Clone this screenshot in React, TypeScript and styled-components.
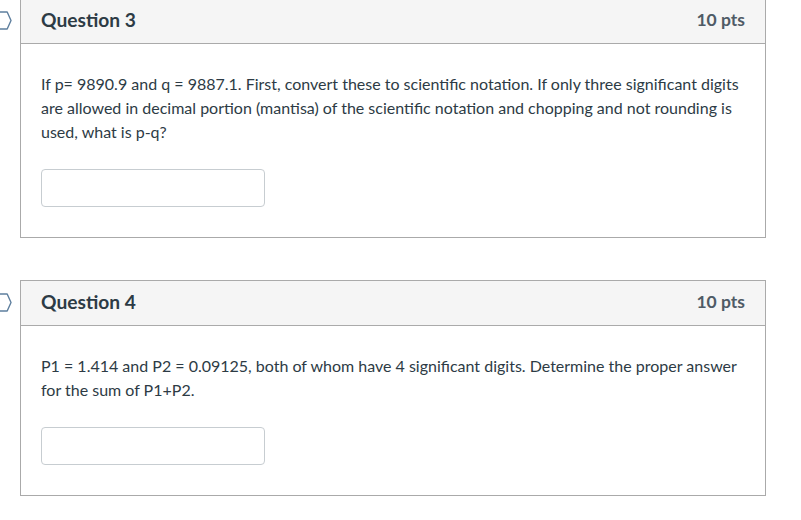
import React from "react";
import styled, { createGlobalStyle } from "styled-components";

const GlobalStyle = createGlobalStyle`
  html, body {
    margin: 0;
    padding: 0;
    background: #ffffff;
  }
  body {
    font-family: Lato, "Open Sans", "Liberation Sans", sans-serif;
    color: #2d3b45;
  }
`;

const Page = styled.div`
  display: flex;
  flex-direction: column;
  gap: 42px;
  width: 746px;
  margin: -2px 0 0 20px;
`;

const QuestionWrap = styled.div`
  position: relative;
`;

const Flag = styled.svg`
  position: absolute;
  left: -20px;
  top: 13px;
  width: 14px;
  height: 20px;
  overflow: hidden;
`;

const Card = styled.section`
  border: 1px solid #aaaaaa;
  background: #ffffff;
`;

const Header = styled.header`
  display: flex;
  align-items: center;
  justify-content: space-between;
  box-sizing: border-box;
  height: 45px;
  padding: 0 20px 3px;
  background: #f5f5f5;
  border-bottom: 1px solid #aaaaaa;
`;

const Title = styled.h2`
  margin: 0;
  font-size: 19.2px;
  font-weight: 700;
  color: #2d3b45;
`;

const Points = styled.span`
  font-size: 17.5px;
  font-weight: 700;
  color: #4f5b66;
`;

const Body = styled.div`
  display: flex;
  flex-direction: column;
  gap: 25px;
  padding: 28px 20px 30px;
`;

const Text = styled.p`
  margin: 0;
  font-size: 16px;
  line-height: 24px;
  color: #2d3b45;
`;

const Answer = styled.input`
  box-sizing: border-box;
  width: 224px;
  height: 38px;
  border: 1px solid #c7cdd1;
  border-radius: 4px;
  background: #ffffff;
  outline: none;
`;

type Q = { title: string; pts: string; text: string };

const questions: Q[] = [
  {
    title: "Question 3",
    pts: "10 pts",
    text:
      "If p= 9890.9 and q = 9887.1. First, convert these to scientific notation. If only three significant digits are allowed in decimal portion (mantisa) of the scientific notation and chopping and not rounding is used, what is p-q?",
  },
  {
    title: "Question 4",
    pts: "10 pts",
    text:
      "P1 = 1.414 and P2 = 0.09125, both of whom have 4 significant digits. Determine the proper answer for the sum of P1+P2.",
  },
];

const FlagIcon = () => (
  <Flag viewBox="0 0 14 20">
    <path
      d="M-6 1 H7.2 L11 9.5 L7.2 18 H-6 Z"
      fill="none"
      stroke="#5e7f9e"
      strokeWidth="1.4"
      strokeLinejoin="round"
    />
  </Flag>
);

export default function App() {
  return (
    <>
      <GlobalStyle />
      <Page>
        {questions.map((q) => (
          <QuestionWrap key={q.title}>
            <FlagIcon />
            <Card>
              <Header>
                <Title>{q.title}</Title>
                <Points>{q.pts}</Points>
              </Header>
              <Body>
                <Text>{q.text}</Text>
                <div>
                  <Answer type="text" aria-label={`${q.title} answer`} />
                </div>
              </Body>
            </Card>
          </QuestionWrap>
        ))}
      </Page>
    </>
  );
}
